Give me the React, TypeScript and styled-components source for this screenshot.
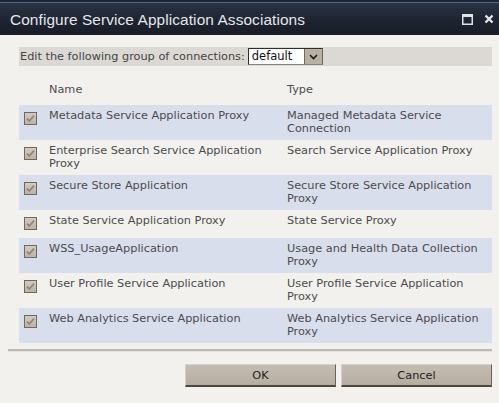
import * as React from 'react'
import styled, { createGlobalStyle } from 'styled-components'

const GlobalStyle = createGlobalStyle`
	html, body {
		margin: 0;
		padding: 0;
		background: #f2f1ee;
	}
`

const Dialog = styled.div`
	width: 499px;
	height: 403px;
	background: #f2f1ee;
	font-family: 'DejaVu Sans', Verdana, sans-serif;
	font-size: 11.3px;
	color: #4e4e4e;
	overflow: hidden;
`

const TitleBar = styled.div`
	height: 33px;
	display: flex;
	align-items: center;
	justify-content: space-between;
	padding: 0 5px 0 10px;
	border-top: 2px solid #1c2533;
	box-shadow: inset 0 1px 0 #4d6a8e;
	background: linear-gradient(#2b3444, #1d2330 60%, #181d27);
`

const Title = styled.h1`
	margin: 0;
	padding-top: 2px;
	font-family: 'Liberation Sans', Arial, sans-serif;
	font-weight: normal;
	font-size: 15.4px;
	color: #e4e6ea;
	letter-spacing: 0.1px;
`

const TitleButtons = styled.div`
	display: flex;
	align-items: center;
	gap: 11px;
	padding-top: 1px;
`

const Body = styled.div`
	padding: 12px 7px 0 19px;
`

const GroupBar = styled.div`
	display: flex;
	align-items: center;
	height: 19px;
	background: #dcd9d5;
	color: #444;
	gap: 3px;
	padding-left: 1px;
`

const Select = styled.div`
	display: flex;
	height: 17px;
	width: 75px;
	border: 1px solid #2e2e2e;
	border-right-color: #6a6460;
	border-bottom-color: #8a847e;
	background: #fff;
	color: #111;
	box-sizing: border-box;
`

const SelectValue = styled.span`
	flex: 1;
	padding-left: 3px;
	line-height: 15px;
	font-size: 11.5px;
`

const SelectArrow = styled.span`
	width: 17px;
	display: flex;
	align-items: center;
	justify-content: center;
	background: #b8b0a3;
	border-left: 1px solid #6f675d;
`

const Table = styled.table`
	width: 473px;
	border-collapse: collapse;
	table-layout: fixed;
`

const HeaderCell = styled.th`
	text-align: left;
	font-weight: normal;
	color: #4e4e4e;
	padding: 16px 0 8px;
	line-height: 15px;
`

const Row = styled.tr<{ $striped?: boolean }>`
	background: ${({ $striped }) => ($striped ? '#d9deed' : '#f2f1ee')};
`

const Cell = styled.td`
	vertical-align: top;
	padding: 4px 8px 5px 0;
	line-height: 13px;
	color: #4c4c4c;
	word-wrap: break-word;
`

const CheckCell = styled.td`
	vertical-align: top;
	padding: 4px 0 5px 2px;
`

const Box = styled.svg`
	display: block;
	margin: 3px;
`

const Divider = styled.div`
	margin: 6px 0 0 -11px;
	border-top: 2px solid #bdbab5;
	border-bottom: 1px solid #e4e2de;
`

const Footer = styled.div`
	display: flex;
	justify-content: flex-end;
	gap: 5px;
	padding-top: 12px;
`

const Button = styled.button`
	width: 151px;
	height: 23px;
	box-sizing: border-box;
	padding: 0;
	border: 1px solid #d6d0c8;
	border-right-color: #6b6157;
	border-bottom: 2px solid #4f463d;
	background: linear-gradient(#c4bdb3, #b6ada1);
	font-family: 'DejaVu Sans', Verdana, sans-serif;
	font-size: 11.3px;
	color: #1e1e1e;
`

const CheckBox = () => (
	<Box width="13" height="13" viewBox="0 0 13 13">
		<defs>
			<linearGradient id="cbg" x1="0" y1="0" x2="0" y2="1">
				<stop offset="0" stopColor="#d3ccc2" />
				<stop offset="1" stopColor="#bcb3a7" />
			</linearGradient>
		</defs>
		<rect x="0.5" y="0.5" width="12" height="12" fill="url(#cbg)" stroke="#6f6860" />
		<path d="M3 6.6 L5.3 9 L10 3.6" fill="none" stroke="#928574" strokeWidth="1.8" />
	</Box>
)

const rows = [
	['Metadata Service Application Proxy', 'Managed Metadata Service Connection'],
	['Enterprise Search Service Application Proxy', 'Search Service Application Proxy'],
	['Secure Store Application', 'Secure Store Service Application Proxy'],
	['State Service Application Proxy', 'State Service Proxy'],
	['WSS_UsageApplication', 'Usage and Health Data Collection Proxy'],
	['User Profile Service Application', 'User Profile Service Application Proxy'],
	['Web Analytics Service Application', 'Web Analytics Service Application Proxy'],
]

export default function App() {
	return (
		<Dialog>
			<GlobalStyle />
			<TitleBar>
				<Title>Configure Service Application Associations</Title>
				<TitleButtons>
					<svg width="11" height="11" viewBox="0 0 11 11">
						<rect x="0.75" y="0.75" width="9.5" height="9.5" fill="none" stroke="#dfe2e6" strokeWidth="1.5" />
						<rect x="1" y="1" width="9" height="2" fill="#dfe2e6" />
					</svg>
					<svg width="10" height="10" viewBox="0 0 10 10">
						<path d="M1.5 1.5 L8.5 8.5 M8.5 1.5 L1.5 8.5" stroke="#e4e6ea" strokeWidth="2.4" />
					</svg>
				</TitleButtons>
			</TitleBar>
			<Body>
				<GroupBar>
					Edit the following group of connections:
					<Select>
						<SelectValue>default</SelectValue>
						<SelectArrow>
							<svg width="9" height="6" viewBox="0 0 9 6">
								<path d="M1 1 L4.5 4.5 L8 1" fill="none" stroke="#1a1a1a" strokeWidth="1.6" />
							</svg>
						</SelectArrow>
					</Select>
				</GroupBar>
				<Table>
					<colgroup>
						<col style={{ width: 30 }} />
						<col style={{ width: 238 }} />
						<col style={{ width: 205 }} />
					</colgroup>
					<thead>
						<tr>
							<HeaderCell />
							<HeaderCell>Name</HeaderCell>
							<HeaderCell>Type</HeaderCell>
						</tr>
					</thead>
					<tbody>
						{rows.map(([name, type], i) => (
							<Row key={name} $striped={i % 2 === 0}>
								<CheckCell>
									<CheckBox />
								</CheckCell>
								<Cell>{name}</Cell>
								<Cell>{type}</Cell>
							</Row>
						))}
					</tbody>
				</Table>
				<Divider />
				<Footer>
					<Button>OK</Button>
					<Button>Cancel</Button>
				</Footer>
			</Body>
		</Dialog>
	)
}
